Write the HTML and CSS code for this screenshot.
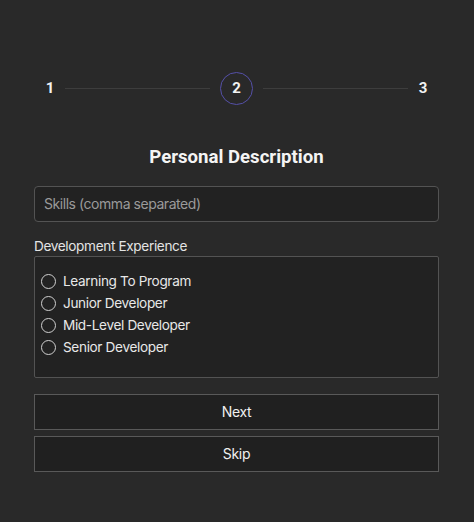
FILE: index.html
```html
<!DOCTYPE html>
<html>
<head>
<meta charset="utf-8">
<link rel="stylesheet" href="styles.css">
</head>
<body>
<div class="page">
  <div class="stepper">
    <span class="step">1</span>
    <span class="line"></span>
    <span class="step active">2</span>
    <span class="line"></span>
    <span class="step">3</span>
  </div>
  <h1 class="title">Personal Description</h1>
  <div class="input">Skills (comma separated)</div>
  <div class="label">Development Experience</div>
  <div class="options">
    <div class="option"><span class="radio"></span>Learning To Program</div>
    <div class="option"><span class="radio"></span>Junior Developer</div>
    <div class="option"><span class="radio"></span>Mid-Level Developer</div>
    <div class="option"><span class="radio"></span>Senior Developer</div>
  </div>
  <div class="btn first">Next</div>
  <div class="btn">Skip</div>
</div>
</body>
</html>
```
FILE: styles.css
```css
html, body {
  margin: 0;
  background: #292929;
  height: 100%;
}
body {
  font-family: Inter, "Noto Sans", sans-serif;
  color: #e8e8e8;
}
.page {
  padding: 71px 35px 0 34px;
}
.stepper {
  display: flex;
  align-items: center;
  height: 34px;
  padding: 0 11px;
}
.step {
  font-family: Roboto, sans-serif;
  font-weight: 700;
  font-size: 15px;
  color: #f2f2f2;
  width: 10px;
  text-align: center;
}
.step.active {
  width: 31px;
  height: 31px;
  border: 1.5px solid #5550a8;
  border-radius: 50%;
  display: flex;
  align-items: center;
  justify-content: center;
}
.line {
  flex: 1;
  height: 1px;
  background: #3d3d3d;
  margin: 0 10px;
}
.title {
  font-family: Roboto, sans-serif;
  font-weight: 700;
  font-size: 18.6px;
  text-align: center;
  color: #f4f4f4;
  margin: 41px 0 18px;
  line-height: 22px;
}
.input {
  height: 34px;
  border: 1px solid #535353;
  border-radius: 4px;
  background: #222222;
  color: #9a9a9a;
  font-size: 14px;
  letter-spacing: -0.45px;
  line-height: 34px;
  padding-left: 9px;
}
.label {
  font-size: 13.6px;
  letter-spacing: -0.35px;
  color: #e4e4e4;
  margin-top: 14px;
  line-height: 20px;
}
.options {
  border: 1px solid #535353;
  border-radius: 2px;
  background: #222222;
  padding-top: 13px;
  box-sizing: border-box;
  height: 122px;
}
.option {
  display: flex;
  align-items: center;
  height: 22px;
  font-size: 13.6px;
  letter-spacing: -0.35px;
  color: #e8e8e8;
  padding-left: 6px;
}
.radio {
  width: 13px;
  height: 13px;
  border: 1.3px solid #d0d0d0;
  border-radius: 50%;
  margin-right: 7px;
  flex: none;
}
.btn {
  height: 34px;
  border: 1px solid #595959;
  background: #202020;
  font-size: 14px;
  letter-spacing: -0.3px;
  line-height: 34px;
  text-align: center;
  color: #f0f0f0;
  margin-top: 6px;
}
.btn.first {
  margin-top: 16px;
}
```
